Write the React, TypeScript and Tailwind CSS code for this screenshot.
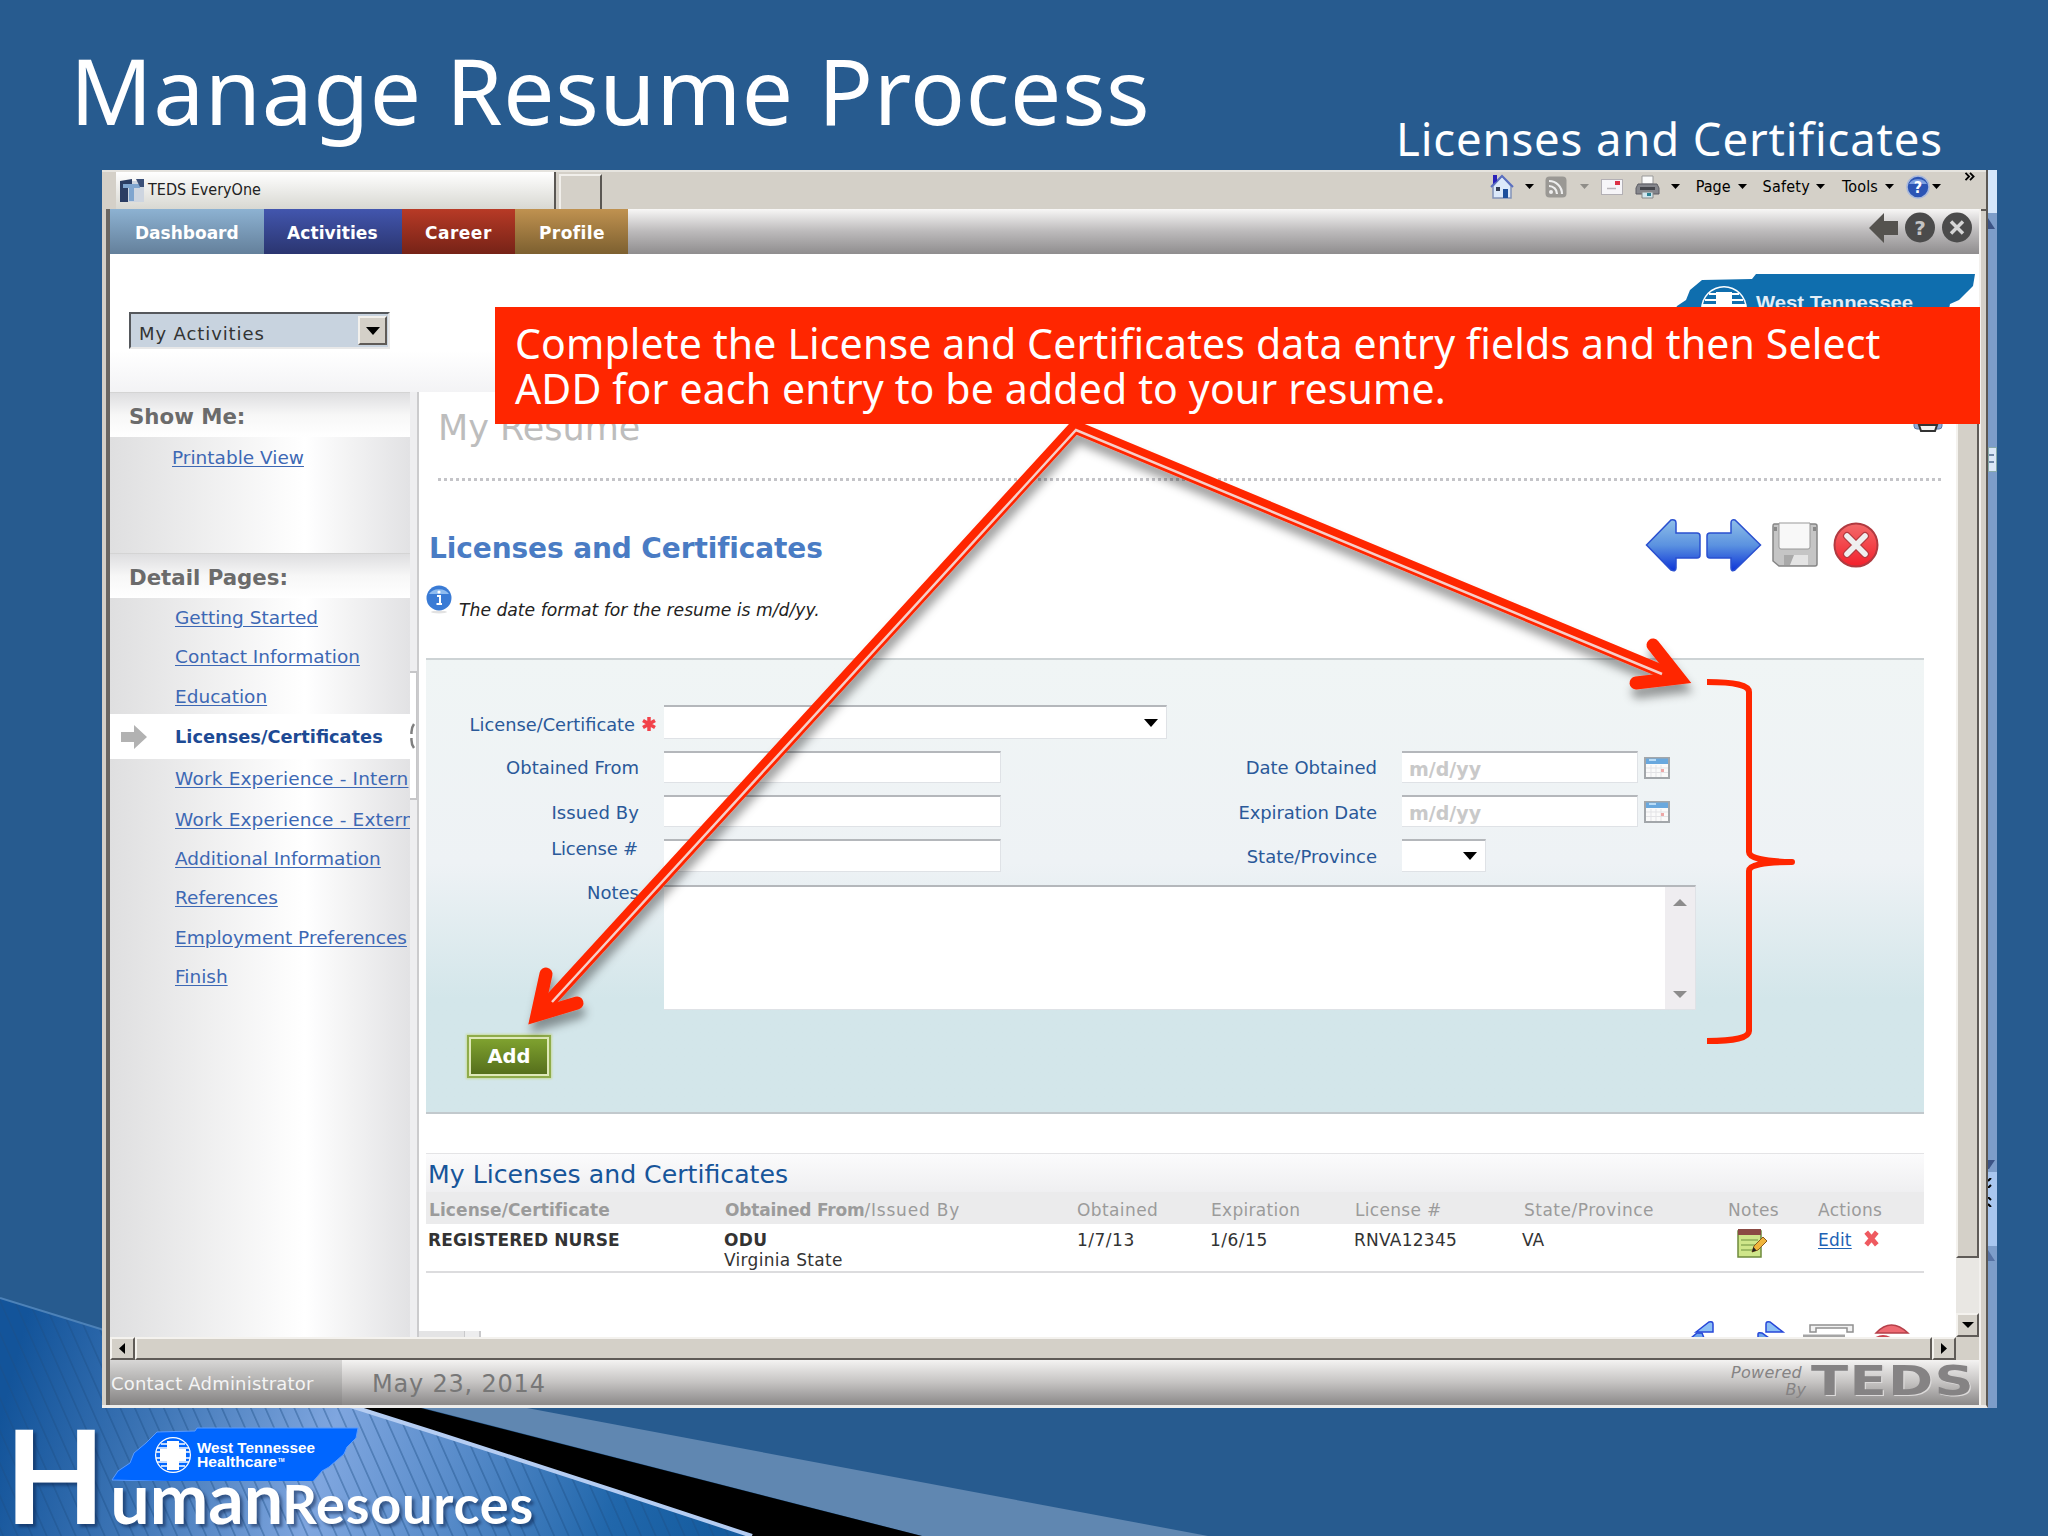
import type { ReactNode } from "react";

const detailPages = [
  "Getting Started",
  "Contact Information",
  "Education",
  "Licenses/Certificates",
  "Work Experience - Intern",
  "Work Experience - Extern",
  "Additional Information",
  "References",
  "Employment Preferences",
  "Finish",
];

const detailHeights = ["h-[39px]", "h-[40px]", "h-[35px]", "h-[45px]", "h-[41px]", "h-[39px]", "h-[39px]", "h-[40px]", "h-[39px]", "h-[39px]"];

function Caret({ className = "" }: { className?: string }) {
  return (
    <svg viewBox="0 0 9 5" className={`h-[5px] w-[9px] shrink-0 ${className}`}>
      <path d="M0 0h9L4.500 5z" fill="currentColor" />
    </svg>
  );
}

function SlideBackground() {
  return (
    <svg viewBox="0 0 2048 1536" className="absolute inset-0 h-full w-full">
      <defs>
        <linearGradient id="swoosh" gradientUnits="userSpaceOnUse" x1="0" y1="1420" x2="700" y2="1600">
          <stop offset="0" stopColor="#13549a" />
          <stop offset="0.22" stopColor="#4178b8" />
          <stop offset="0.45" stopColor="#7fa6df" />
          <stop offset="0.62" stopColor="#5a8dcb" />
          <stop offset="0.85" stopColor="#2167ab" />
          <stop offset="1" stopColor="#155c9f" />
        </linearGradient>
        <pattern id="stripes" width="14.500" height="14" patternUnits="userSpaceOnUse" patternTransform="skewX(24)">
          <rect width="1.800" height="14" fill="#1c4f85" opacity="0.42" />
        </pattern>
      </defs>
      <path d="M380 1397L922 1536H1208L527 1408L480 1397z" fill="#6087b1" />
      <path d="M320 1397H380L421 1408L800 1505L922 1536H752z" fill="#000" />
      <path d="M0 1298L357 1408Q560 1472 752 1536H0z" fill="url(#swoosh)" />
      <path d="M0 1298L357 1408Q560 1472 752 1536H0z" fill="url(#stripes)" />
      <path d="M0 1298L357 1408" stroke="#4d82b8" strokeWidth="2" fill="none" />
      <path d="M340 1403L357 1408Q560 1472 752 1536" stroke="#b5cdf2" strokeWidth="4" fill="none" />
    </svg>
  );
}

function ToolbarIcons() {
  return (
    <div className="flex h-[25px] items-center self-start pt-[4px] font-['DejaVu_Sans_Condensed','DejaVu_Sans',sans-serif] text-[16px] text-black [font-stretch:condensed]">
      <svg viewBox="0 0 24 25" className="h-[25px] w-[24px]">
        <path d="M3 12v12h18V12L12 2z" fill="#dce9fa" stroke="#8293b8" strokeWidth="1.500" />
        <path d="M1 13L12 2l11 11" stroke="#5a6fc0" strokeWidth="2" fill="none" />
        <path d="M3 1h4v6l-4 3z" fill="#2a22b8" />
        <path d="M13 15h5v9h-5z" fill="#1d4f9c" />
        <path d="M6 13h4v4H6z" fill="#333d55" />
      </svg>
      <Caret className="ml-[11px]" />
      <svg viewBox="0 0 22 22" className="ml-[11px] h-[22px] w-[22px]">
        <rect x="0.500" y="0.500" width="21" height="21" rx="4" fill="#9a9894" />
        <circle cx="6" cy="16" r="2" fill="#eee" />
        <path d="M4 10a8 8 0 0 1 8 8M4 5a13 13 0 0 1 13 13" stroke="#eee" strokeWidth="2.200" fill="none" />
      </svg>
      <Caret className="ml-[13px] text-[#8f8d88]" />
      <svg viewBox="0 0 22 16" className="ml-[12px] h-[16px] w-[22px]">
        <rect x="0.500" y="0.500" width="21" height="15" fill="#f6f5f8" stroke="#b3b0b5" />
        <path d="M14 2h5v4h-5z" fill="#dc3245" />
        <path d="M6 9.500h9" stroke="#b9b6bb" strokeWidth="1.500" />
      </svg>
      <svg viewBox="0 0 25 24" className="ml-[12px] h-[24px] w-[25px]">
        <path d="M7 1h11v8H7z" fill="#fbfbfb" stroke="#999" />
        <path d="M3 9h19l2 4v6H1v-6z" fill="#85868c" stroke="#5c5d64" />
        <path d="M5 12h15v3H5z" fill="#45464c" />
        <path d="M7 17h11v6H7z" fill="#cfe6ee" stroke="#888" />
        <path d="M12 18h4v3h-4z" fill="#2b8192" />
      </svg>
      <Caret className="ml-[11px]" />
      <span className="ml-[16px]">Page</span>
      <Caret className="ml-[7px]" />
      <span className="ml-[16px] tracking-[0.24px]">Safety</span>
      <Caret className="ml-[6px]" />
      <span className="ml-[17px] tracking-[0.16px]">Tools</span>
      <Caret className="ml-[7px]" />
      <svg viewBox="0 0 24 24" className="ml-[12px] h-[24px] w-[24px]">
        <circle cx="12" cy="12" r="11" fill="#2c55b5" stroke="#a9b9dc" strokeWidth="1.500" />
        <path d="M3 9a9.500 7 0 0 1 18 0z" fill="#7fa0e0" />
        <text x="12" y="18" textAnchor="middle" fontSize="16" fontWeight="700" fill="#fff" fontFamily="DejaVu Sans">?</text>
      </svg>
      <Caret className="ml-[2px]" />
      <svg viewBox="0 0 12 10" className="mb-[20px] ml-[23px] h-[9px] w-[12px]">
        <path d="M1 1l4 4-4 4M6 1l4 4-4 4" stroke="#000" strokeWidth="2" fill="none" />
      </svg>
    </div>
  );
}

function TabBar() {
  return (
    <div className="flex h-[39px] border-b-2 border-[#5d5955] bg-[#d4d0c8] pl-[10px]">
      <div className="flex w-[440px] items-center border-r-2 border-[#5a5753] bg-linear-to-b from-white to-[#d8d8d2] pb-[2px] pl-[4px]">
        <svg viewBox="0 0 24 24" className="h-[24px] w-[24px]">
          <path d="M0 3h24v21H0z" fill="#cdd5e0" />
          <path d="M0 3l12-2v8H8v15H0z" fill="#2b3d63" />
          <path d="M3 6h17v4h-6v13H9V10H3z" fill="#7fa5cf" />
          <path d="M16 1h8v8h-4z" fill="#3b5078" />
        </svg>
        <span className="ml-[4px] font-['DejaVu_Sans_Condensed','DejaVu_Sans',sans-serif] text-[16px] text-[#222] [font-stretch:condensed]">TEDS EveryOne</span>
      </div>
      <div className="mt-[2px] ml-[3px] w-[43px] border-t-2 border-r-2 border-l-2 border-t-[#f1efeb] border-r-[#5a5753] border-l-[#f1efeb]" />
      <div className="ml-auto pr-[10px]">
        <ToolbarIcons />
      </div>
    </div>
  );
}

function NavBar() {
  return (
    <div className="flex h-[45px] bg-linear-to-b from-[#f8f7f6] via-[#bcbabb] to-[#8f8d8e] text-[17px] leading-[48px] font-bold text-white">
      <div className="w-[154px] bg-linear-to-b from-[#8db2d2] to-[#64809b] pl-[25px]">Dashboard</div>
      <div className="w-[138px] bg-linear-to-b from-[#4256ae] to-[#2b3570] pl-[23px] tracking-[0.1px]">Activities</div>
      <div className="w-[113px] bg-linear-to-b from-[#b83a26] to-[#762317] pl-[23px] tracking-[0.5px]">Career</div>
      <div className="w-[113px] bg-linear-to-b from-[#c09250] to-[#7d6030] pl-[24px] tracking-[0.4px]">Profile</div>
      <svg viewBox="0 0 106 32" className="mt-[3px] mr-[6px] ml-auto h-[32px] w-[106px]">
        <path d="M2 16L17 1v8h14v14H17v8z" fill="#55534f" />
        <circle cx="53" cy="15.500" r="15" fill="#4b4b4b" />
        <text x="53" y="23" textAnchor="middle" fontSize="20" fontWeight="700" fill="#c4c4c4" fontFamily="DejaVu Sans">?</text>
        <circle cx="90" cy="15.500" r="15" fill="#4b4b4b" />
        <path d="M84 9.500l12 12M96 9.500l-12 12" stroke="#d5d5d5" strokeWidth="3.500" />
      </svg>
    </div>
  );
}

function SectionHead({ children }: { children: ReactNode }) {
  return (
    <div className="h-[45px] border-t border-[#d4d4d4] bg-linear-to-b from-[#dedee0] via-[#f7f7f7] to-white pl-[19px] text-[21.3px] leading-[47px] font-bold text-[#6b6b6b]">
      {children}
    </div>
  );
}

function Sidebar() {
  return (
    <div className="w-[300px] shrink-0 overflow-hidden bg-linear-to-r from-[#dfdfe0] via-white via-65% to-[#e2e2e4] text-[18.5px] text-[#3d68b4]">
      <SectionHead>Show Me:</SectionHead>
      <div className="h-[116px] pt-[9px] pl-[62px] leading-[24px]">
        <span className="underline underline-offset-2">Printable View</span>
      </div>
      <SectionHead>Detail Pages:</SectionHead>
      <div className="pt-[2px]">
        {detailPages.map((page, i) =>
          i === 3 ? (
            <div key={page} className={`flex items-center bg-white pl-[10px] text-[17.8px] font-bold text-[#1d4a94] ${detailHeights[i]}`}>
              <svg viewBox="0 0 28 28" className="h-[28px] w-[28px]">
                <path d="M1 9h13V2l13 12-13 12v-7H1z" fill="#b2b2b2" />
              </svg>
              <span className="ml-[27px] pt-[2px]">{page}</span>
            </div>
          ) : (
            <div key={page} className={`pl-[65px] leading-[24px] whitespace-nowrap ${i > 3 ? "pt-[8px]" : "pt-[6px]"} ${detailHeights[i]}`}>
              <span className={`underline underline-offset-2 ${i === 4 || i === 5 ? "tracking-[0.18px]" : ""}`}>{page}</span>
            </div>
          ),
        )}
      </div>
    </div>
  );
}

function Gutter() {
  return (
    <div className="w-[9px] shrink-0 border-r-2 border-[#cbcbcd] bg-[#eeeef0] pt-[279px]">
      <div className="flex h-[129px] items-center border-y-2 border-r border-[#c6c6c8] bg-white">
        <svg viewBox="0 0 6 26" className="h-[26px] w-[6px]">
          <path d="M4 1Q1 5 1.500 11M1.500 15Q1 21 4 25" stroke="#808080" strokeWidth="2.500" fill="none" />
        </svg>
      </div>
    </div>
  );
}

function ActionIcons() {
  return (
    <svg viewBox="0 0 236 54" className="h-[54px] w-[236px]">
      <defs>
        <linearGradient id="blueArrow" x1="0" y1="0" x2="0" y2="1">
          <stop offset="0" stopColor="#8fbfe8" />
          <stop offset="0.5" stopColor="#5b92e0" />
          <stop offset="1" stopColor="#0d35d8" />
        </linearGradient>
        <linearGradient id="redDot" x1="0" y1="0" x2="0" y2="1">
          <stop offset="0" stopColor="#f36a6a" />
          <stop offset="1" stopColor="#f3202c" />
        </linearGradient>
      </defs>
      <path d="M1.500 27L26 2q5-1 5 3v10h21q3 0 3 3v19q0 3-3 3H31v10q0 4-5 2z" fill="url(#blueArrow)" stroke="#2a50d0" strokeWidth="1.500" />
      <path d="M115.500 27L90 2q-4-1-4 3v10H65q-3 0-3 3v19q0 3 3 3h21v10q0 4 4 2z" fill="url(#blueArrow)" stroke="#2a50d0" strokeWidth="1.500" />
      <path d="M129 6h41q2 0 2 2v38q0 2-2 2h-36l-6-5V8q0-2 1-2z" fill="#c5c5c5" stroke="#858585" strokeWidth="1.500" />
      <path d="M134 5h31v24q0 2-2 2h-27q-2 0-2-2z" fill="#f8f8f8" stroke="#999" />
      <path d="M139 37h24v10h-24z" fill="#a9a9a9" />
      <path d="M149 37h14v10h-18z" fill="#e4e4e4" />
      <path d="M129 9h3v4h-3zM168 9h3v4h-3z" fill="#888" />
      <circle cx="211" cy="27" r="21.500" fill="url(#redDot)" stroke="#b03a40" strokeWidth="2" />
      <path d="M202 18l18 18M220 18l-18 18" stroke="#b33a40" strokeWidth="8" strokeLinecap="round" />
      <path d="M202 18l18 18M220 18l-18 18" stroke="#efefef" strokeWidth="5.500" strokeLinecap="round" />
    </svg>
  );
}

function Field({ className, children }: { className: string; children?: ReactNode }) {
  return (
    <div className={`flex shrink-0 items-center border-t-2 border-r border-b border-[#dfe2e6] border-t-[#b4b7bb] bg-white ${className}`}>{children}</div>
  );
}

function Calendar() {
  return (
    <svg viewBox="0 0 26 22" className="mt-[6px] ml-[6px] h-[22px] w-[26px]">
      <rect x="1" y="1" width="24" height="20" fill="#fafafa" stroke="#a2a6aa" strokeWidth="2" />
      <path d="M2 1.500h22V7H2z" fill="#69a8de" />
      <path d="M5 3h7" stroke="#b9dcf7" strokeWidth="2" />
      <path d="M2 11h22M2 15.500h22M7 8v12M12 8v12M17 8v12" stroke="#e3e3e6" />
      <path d="M17 12h3v3h-3z" fill="#eda7a7" />
    </svg>
  );
}

function Label({ className, children }: { className: string; children: ReactNode }) {
  return <div className={`shrink-0 text-right leading-[24px] whitespace-nowrap ${className}`}>{children}</div>;
}

function LicenseForm() {
  return (
    <div className="mt-[36px] h-[456px] w-[1498px] border-y-2 border-t-[#cdd3d5] border-b-[#c2c9cd] bg-linear-to-b from-[#f0f5f5] via-[#eef2f5] via-45% to-[#d3e6ea] to-75% pt-[45px] text-[18px] text-[#2a5999]">
      <div className="flex h-[46px]">
        <Label className="w-[209px] pt-[8px] text-[17.8px]">License/Certificate</Label>
        <svg viewBox="0 0 16 16" className="mt-[11px] mr-[7px] ml-[6px] h-[16px] w-[16px]">
          <path d="M8 1v14M2 4.500l12 7M14 4.500l-12 7" stroke="#f2424a" strokeWidth="3.500" />
        </svg>
        <Field className="h-[34px] w-[503px] justify-end pr-[8px]">
          <svg viewBox="0 0 14 8" className="h-[8px] w-[14px]">
            <path d="M0 0h14L7 8z" />
          </svg>
        </Field>
      </div>
      <div className="flex h-[44px]">
        <Label className="w-[213px] pt-[5px]">Obtained From</Label>
        <Field className="ml-[25px] h-[32px] w-[337px]" />
        <Label className="w-[376px] pt-[5px]">Date Obtained</Label>
        <Field className="ml-[25px] h-[32px] w-[236px] pt-[3px] pl-[7px] text-[19px] font-bold text-[#c9c9c9]">m/d/yy</Field>
        <Calendar />
      </div>
      <div className="flex h-[44px]">
        <Label className="w-[213px] pt-[6px] tracking-[0.1px]">Issued By</Label>
        <Field className="ml-[25px] h-[32px] w-[337px]" />
        <Label className="w-[376px] pt-[6px] tracking-[-0.1px]">Expiration Date</Label>
        <Field className="ml-[25px] h-[32px] w-[236px] pt-[3px] pl-[7px] text-[19px] font-bold text-[#c9c9c9]">m/d/yy</Field>
        <Calendar />
      </div>
      <div className="flex h-[46px]">
        <Label className="-mt-[2px] w-[212px] tracking-[-0.2px]">License #</Label>
        <Field className="ml-[26px] h-[33px] w-[337px]" />
        <Label className="w-[376px] pt-[6px]">State/Province</Label>
        <Field className="ml-[25px] h-[33px] w-[84px] justify-end pr-[8px]">
          <svg viewBox="0 0 14 8" className="h-[8px] w-[14px]">
            <path d="M0 0h14L7 8z" />
          </svg>
        </Field>
      </div>
      <div className="flex h-[125px]">
        <Label className="-mt-[4px] w-[213px]">Notes</Label>
        <Field className="ml-[25px] h-[125px] w-[1032px] justify-end">
          <div className="flex h-full w-[30px] flex-col items-center justify-between bg-[#efedf0] pt-[12px] pb-[11px]">
            <svg viewBox="0 0 14 7" className="h-[7px] w-[14px]">
              <path d="M0 7h14L7 0z" fill="#8c8c8c" />
            </svg>
            <svg viewBox="0 0 14 7" className="h-[7px] w-[14px]">
              <path d="M0 0h14L7 7z" fill="#8c8c8c" />
            </svg>
          </div>
        </Field>
      </div>
      <div className="mt-[25px] ml-[41px] h-[43px] w-[84px] border-2 border-[#8fac4a] bg-[#dfe8b8] p-[2px] shadow-[0_0_2px_1px_#c9dba0]">
        <div className="h-full bg-linear-to-b from-[#7fa22f] to-[#566f1c] text-center text-[19.5px] leading-[35px] font-bold text-white">Add</div>
      </div>
    </div>
  );
}

function LicenseTable() {
  const cols = "grid grid-cols-[296px_352px_135px_143px_169px_204px_90px_1fr] pl-[2px]";
  return (
    <div className="mt-[39px] w-[1498px] text-[17px]">
      <div className="h-[39px] border-t border-[#e4e4e6] bg-linear-to-b from-[#fbfbfc] to-[#efeff1] pt-[6px] pl-[2px] text-[25.2px] leading-[30px] text-[#17559a]">My Licenses and Certificates</div>
      <div className={`${cols} h-[32px] bg-[#ebebec] leading-[36px] whitespace-nowrap text-[#9b9b9b]`}>
        <b className="ml-[1px] tracking-[0.1px]">License/Certificate</b>
        <span className="ml-[1px]">
          <b className="tracking-[-0.2px]">Obtained From</b>
          <span className="tracking-[0.8px]">/Issued By</span>
        </span>
        <span className="ml-[1px] tracking-[0.4px]">Obtained</span>
        <span className="tracking-[0.3px]">Expiration</span>
        <span className="ml-[1px] tracking-[0.3px]">License #</span>
        <span className="ml-[1px] tracking-[0.5px]">State/Province</span>
        <span className="ml-[1px] tracking-[0.4px]">Notes</span>
        <span className="ml-[1px] tracking-[0.3px]">Actions</span>
      </div>
      <div className={`${cols} h-[49px] border-b-2 border-[#dcdcde] pt-[6px] leading-[20px] text-[#333]`}>
        <b className="tracking-[0.1px]">REGISTERED NURSE</b>
        <div>
          <b className="block tracking-[0.3px]">ODU</b>
          <span className="block tracking-[0.3px]">Virginia State</span>
        </div>
        <span className="ml-[1px] tracking-[0.5px]">1/7/13</span>
        <span className="-ml-[1px] tracking-[0.5px]">1/6/15</span>
        <span className="tracking-[0.25px]">RNVA12345</span>
        <span className="-ml-[1px]">VA</span>
        <svg viewBox="0 0 30 30" className="-mt-[2px] ml-[10px] h-[30px] w-[30px]">
          <path d="M1 3h23v26H1z" fill="#cfe68a" stroke="#6f8a3c" strokeWidth="1.500" />
          <path d="M1 1h23v6H1z" fill="#8b4a44" />
          <path d="M4 12h17M4 17h17M4 22h12" stroke="#8fae58" strokeWidth="1.500" />
          <path d="M15 24l2-6 9-9 4 4-9 9z" fill="#f0b53c" stroke="#8a5a1e" />
          <path d="M15 24l1.500-5 3 3.500z" fill="#222" />
        </svg>
        <div className="flex">
          <span className="ml-[1px] tracking-[0.2px] text-[#1e62b5] underline underline-offset-2">Edit</span>
          <svg viewBox="0 0 16 16" className="ml-[11px] h-[17px] w-[17px]">
            <path d="M3 2l10 12M13 2L3 14" stroke="#ef5a60" strokeWidth="4.500" />
          </svg>
        </div>
      </div>
      <svg viewBox="0 0 230 18" className="mt-[47px] ml-[1262px] h-[18px] w-[230px]">
        <path d="M8 12L21 2q4-1 4 2v8z" fill="#8cc0f5" stroke="#2747d8" strokeWidth="1.500" />
        <path d="M3 18l6-5h5l2 5z" fill="#6ea6ec" stroke="#2747d8" strokeWidth="1.500" />
        <path d="M78 12V4q0-3 4-2l13 10z" fill="#8cc0f5" stroke="#2747d8" strokeWidth="1.500" />
        <path d="M70 18v-4q0-2 4-1l7 5z" fill="#6ea6ec" stroke="#2747d8" strokeWidth="1.500" />
        <path d="M122 12V5h43v7h-6V8h-31v4z" fill="#f2f2f2" stroke="#909090" strokeWidth="1.500" />
        <path d="M115 16h42" stroke="#a5a5a5" strokeWidth="3" />
        <path d="M188 13q15-16 32 0z" fill="#ee6a72" stroke="#b5404a" strokeWidth="1.500" />
        <path d="M186 18q9-6 18 0z" fill="#c94650" />
      </svg>
    </div>
  );
}

function ResumeContent() {
  return (
    <div className="relative w-[1537px] shrink-0 overflow-hidden bg-white pt-[15px] pl-[7px]">
      <div className="flex h-[40px] pt-[1px] pl-[12px]">
        <div className="text-[35px] leading-[40px] text-[#bdbdbd]">My Resume</div>
        <svg viewBox="0 0 30 24" className="mr-[13px] ml-auto h-[24px] w-[30px]">
          <path d="M5 1h20v9H5z" fill="#eee" stroke="#777" />
          <path d="M1 9h28v9q0 3-3 3H4q-3 0-3-3z" fill="#8fa9d6" stroke="#5c76a6" />
          <path d="M6 17h18l-2 6H8z" fill="#f2f2f2" stroke="#333" strokeWidth="2" />
        </svg>
      </div>
      <div className="mt-[31px] ml-[12px] h-[3px] w-[1506px] bg-[repeating-linear-gradient(90deg,#c4c4c8_0_3px,transparent_3px_6px)]" />
      <div className="mt-[37px] flex h-[54px]">
        <div className="mt-[13px] ml-[3px] text-[28px] leading-[36px] font-bold tracking-[-0.1px] text-[#4a7cc4]">Licenses and Certificates</div>
        <div className="mr-[75px] ml-auto">
          <ActionIcons />
        </div>
      </div>
      <div className="mt-[13px] flex h-[37px]">
        <svg viewBox="0 0 26 29" className="h-[29px] w-[26px]">
          <ellipse cx="13" cy="27" rx="8" ry="1.500" fill="#e2e2e2" />
          <circle cx="13" cy="13" r="12.500" fill="#3a7bd5" />
          <path d="M3 9a11 8 0 0 1 20 0z" fill="#8fbcf0" />
          <path d="M11 11h3v8M10.500 19h5.500" stroke="#fff" strokeWidth="2" fill="none" />
          <circle cx="13" cy="7" r="1.600" fill="#fff" />
        </svg>
        <div className="pt-[13px] pl-[7px] text-[17.2px] leading-[24px] text-[#222] italic">The date format for the resume is m/d/yy.</div>
      </div>
      <LicenseForm />
      <LicenseTable />
      <div className="absolute bottom-0 left-0 flex h-[6px] w-[62px] border-r-2 border-[#c9c9cb] bg-[#ededee]">
        <div className="w-[46px] border-r border-[#c9c9cb] bg-[#e4e4e5]" />
      </div>
    </div>
  );
}

function VerticalScrollbar() {
  return (
    <div className="flex w-[23px] shrink-0 flex-col bg-[#e9e7e3]">
      <div className="h-[866px] border-r-2 border-b-2 border-l-2 border-[#5f5b57] border-l-[#f4f2ee] bg-[#d4d0c8]" />
      <div className="mt-auto flex h-[24px] items-center justify-center border-2 border-[#f4f2ee] border-r-[#5f5b57] border-b-[#5f5b57] bg-[#d4d0c8]">
        <svg viewBox="0 0 12 6" className="h-[6px] w-[12px]">
          <path d="M0 0h12L6 6z" />
        </svg>
      </div>
    </div>
  );
}

function HorizontalScrollbar() {
  const bevel = "border-2 border-[#f4f2ee] border-r-[#5f5b57] border-b-[#5f5b57] bg-[#d4d0c8]";
  return (
    <div className="flex h-[23px] bg-[#d4d0c8]">
      <div className={`flex w-[25px] items-center justify-center pr-[2px] pb-[1px] ${bevel}`}>
        <svg viewBox="0 0 6 11" className="h-[11px] w-[6px]">
          <path d="M6 0v11L0 5.500z" />
        </svg>
      </div>
      <div className={`w-[1797px] ${bevel}`} />
      <div className={`flex w-[24px] items-center justify-center pb-[1px] ${bevel}`}>
        <svg viewBox="0 0 6 11" className="h-[11px] w-[6px]">
          <path d="M0 0v11l6-5.500z" />
        </svg>
      </div>
    </div>
  );
}

function StatusBar() {
  return (
    <div className="flex h-[45px] bg-linear-to-b from-[#f4f3f2] via-[#c5c3c2] to-[#8b8989]">
      <div className="w-[232px] bg-linear-to-b from-[#d8d7d6] via-[#b0afae] to-[#858383] pl-[1px] text-[18px] leading-[48px] tracking-[0.2px] text-[#f4f4f4]">Contact Administrator</div>
      <div className="ml-[30px] text-[24px] leading-[49px] tracking-[0.8px] text-[#777]">May 23, 2014</div>
      <div className="ml-auto flex text-[#858384]">
        <div className="pt-[4px] text-right text-[16px] leading-[17px] italic">
          <div className="mr-[4px] tracking-[0.3px]">Powered</div>
          <div>By</div>
        </div>
        <div className="ml-[5px] w-[168px]">
          <div className="w-fit origin-left scale-x-[1.36] text-[40px] leading-[43px] font-bold tracking-[1px] [text-shadow:1px_1px_0_#dcdada]">TEDS</div>
        </div>
      </div>
    </div>
  );
}

function StateLogoTop() {
  return (
    <svg viewBox="0 0 302 60" className="absolute top-[20px] right-[4px] h-[60px] w-[302px]">
      <path d="M0 40l4-8 9-6 4-10 12-10 50-1 4-5h219l-2 12-6 6-8 8-9 4-4 20H0z" fill="#0f6eae" />
      <circle cx="51" cy="35" r="23" fill="#fff" />
      <circle cx="51" cy="35" r="21.500" fill="#0f6eae" />
      <path d="M36 20h30M32 26h38M30 32h42" stroke="#fff" strokeWidth="1.800" />
      <path d="M43 18h16v12h14v16H29V30h14z" fill="#fff" />
      <text x="83" y="35" fontSize="19" fontWeight="700" fill="#e3eef7" fontFamily="Liberation Sans" textLength="157" lengthAdjust="spacingAndGlyphs">West Tennessee</text>
    </svg>
  );
}

function BrowserWindow() {
  return (
    <div className="relative flex h-[1238px]">
      <div className="ml-[102px] flex w-[1886px] flex-col border-r-2 border-b-[3px] border-[#5b5854] border-b-[#eeedeb] bg-[#d4d0c8]">
        <div className="border-t-2 border-[#e6e4df] pl-[4px]">
          <TabBar />
        </div>
        <div className="-mt-[2px] mr-[5px] ml-[4px] flex flex-1 flex-col border-r-2 border-l-[4px] border-r-[#f3f1ee] border-l-[#6a6763] bg-white">
          <NavBar />
          <div className="relative h-[138px] bg-linear-to-b from-white from-70% to-[#f3f3f5] pt-[58px] pl-[19px]">
            <div className="flex h-[37px] w-[261px] border-2 border-[#e8e8e8] border-t-[#55585c] border-l-[#55585c] bg-[#c8d3df] text-[18px] text-[#333]">
              <div className="flex-1 pl-[8px] leading-[39px] tracking-[0.9px]">My Activities</div>
              <div className="my-[2px] mr-px flex w-[29px] items-center justify-center border-2 border-[#f2f0ec] border-r-[#5f5b57] border-b-[#5f5b57] bg-[#d4d0c8]">
                <svg viewBox="0 0 14 8" className="h-[8px] w-[14px]">
                  <path d="M0 0h14L7 8z" />
                </svg>
              </div>
            </div>
            <StateLogoTop />
          </div>
          <div className="flex h-[945px]">
            <Sidebar />
            <Gutter />
            <ResumeContent />
            <VerticalScrollbar />
          </div>
          <HorizontalScrollbar />
          <StatusBar />
        </div>
      </div>
      <div className="flex w-[9px] flex-col bg-[#7d9dc9]">
        <div className="h-[43px] bg-[#d5e6fa]" />
        <svg viewBox="0 0 9 12" className="mt-[5px] h-[12px] w-[9px]">
          <path d="M0 0l7 11H0z" fill="#3c5485" />
        </svg>
        <div className="mt-[217px] h-[25px] border border-[#8aa] bg-[#dbe8f7] pt-[6px]">
          <div className="h-[9px] w-[5px] border-y-2 border-[#7189a8]" />
        </div>
        <svg viewBox="0 0 9 12" className="mt-[688px] h-[12px] w-[9px]">
          <path d="M0 0h7L1 9H0z" fill="#3c5485" />
        </svg>
        <div className="flex h-[74px] flex-col gap-[9px] bg-[#a8c6ef] pt-[6px]">
          <svg viewBox="0 0 4 10" className="h-[10px] w-[4px]">
            <path d="M0 3l3-3M0 10l3-3" stroke="#000" strokeWidth="2" />
          </svg>
          <svg viewBox="0 0 4 10" className="h-[10px] w-[4px]">
            <path d="M0 0l3 3M0 7l3 3" stroke="#000" strokeWidth="2" />
          </svg>
        </div>
        <svg viewBox="0 0 9 12" className="mt-[4px] h-[12px] w-[9px]">
          <path d="M0 0l7 11H0z" fill="#5672a3" />
        </svg>
      </div>
    </div>
  );
}

function Annotations() {
  return (
    <>
      <svg viewBox="0 0 2048 1536" className="absolute inset-0 h-full w-full">
        <defs>
          <filter id="arrowShadow" x="-10%" y="-10%" width="120%" height="120%">
            <feDropShadow dx="2" dy="9" stdDeviation="5" floodColor="#000" floodOpacity="0.38" />
          </filter>
        </defs>
        <g filter="url(#arrowShadow)" fill="none" stroke="#ff2600" strokeWidth="13">
          <path d="M537 1015L1075 427L1678 678" />
          <path d="M546 974L537 1015L577 1003" strokeLinecap="round" strokeMiterlimit="10" />
          <path d="M1653 645L1679 678L1636 683" strokeLinecap="round" strokeMiterlimit="10" />
        </g>
        <path d="M552 1002L1076 430L1662 674" fill="none" stroke="#f6cfc9" strokeWidth="2.500" />
        <path d="M1707 682Q1749 682 1749 692V852Q1749 861 1792 862Q1749 862 1749 871V1031Q1749 1041 1707 1041" fill="none" stroke="#ff2600" strokeWidth="6" strokeLinejoin="round" />
      </svg>
      <div className="absolute top-[307px] left-[495px] h-[117px] w-[1485px] bg-[#ff2600] pt-[14px] pl-[20px] font-['Noto_Sans',sans-serif] text-[41px] leading-[45px] tracking-[0.15px] text-white">
        Complete the License and Certificates data entry fields and then Select
        <br />
        ADD for each entry to be added to your resume.
      </div>
    </>
  );
}

function FooterBrand() {
  return (
    <div className="relative -mt-[9px] h-[137px]">
      <div className="flex items-baseline pl-[5px] font-[Lato,sans-serif] leading-[150px] font-bold text-white [text-shadow:3px_3px_3px_rgba(10,30,70,0.5)]">
        <span className="text-[130px]">H</span>
        <span className="ml-[5px] text-[70px]">uman</span>
        <span className="-ml-[1px] text-[54px] tracking-[0.8px]">Resources</span>
      </div>
      <svg viewBox="0 0 248 54" className="absolute top-[28px] left-[111px] h-[54px] w-[248px]">
        <path d="M1 53l6-9 12-8 4-10 12-10 11-11 38-1 2-3h161l-2 10-9 9-3 7-15 13-7 4-5 6-7 8z" fill="#0066ff" stroke="#5b9bff" />
        <circle cx="62" cy="28" r="18" fill="#fff" />
        <circle cx="62" cy="28" r="16.800" fill="#0066ff" />
        <path d="M50 17h24M46 21h32M45 25h34M45 31h34M46 35h32M50 39h24" stroke="#fff" strokeWidth="1.600" />
        <path d="M56 14h12v8h7v12h-7v9H56v-9h-7V22h7z" fill="#fff" />
        <text x="86" y="26" fontSize="14" fontWeight="700" fill="#fff" fontFamily="Liberation Sans" textLength="118" lengthAdjust="spacingAndGlyphs">West Tennessee</text>
        <text x="86" y="40" fontSize="14" fontWeight="700" fill="#fff" fontFamily="Liberation Sans" textLength="80" lengthAdjust="spacingAndGlyphs">Healthcare</text>
        <text x="167" y="35" fontSize="4.500" fontWeight="700" fill="#fff" fontFamily="Liberation Sans">TM</text>
      </svg>
    </div>
  );
}

export default function App() {
  return (
    <div className="relative h-[1536px] w-[2048px] overflow-hidden bg-[#275b8f] font-['DejaVu_Sans',sans-serif]">
      <SlideBackground />
      <header className="relative flex h-[170px] justify-between pr-[105px] pl-[70px] font-['Noto_Sans',sans-serif] text-white">
        <h1 className="mt-[40px] text-[91px] leading-[100px] tracking-[0.6px]">Manage Resume Process</h1>
        <h2 className="mt-[113px] text-[45.5px] leading-[50px] tracking-[0.85px]">Licenses and Certificates</h2>
      </header>
      <BrowserWindow />
      <FooterBrand />
      <Annotations />
    </div>
  );
}
